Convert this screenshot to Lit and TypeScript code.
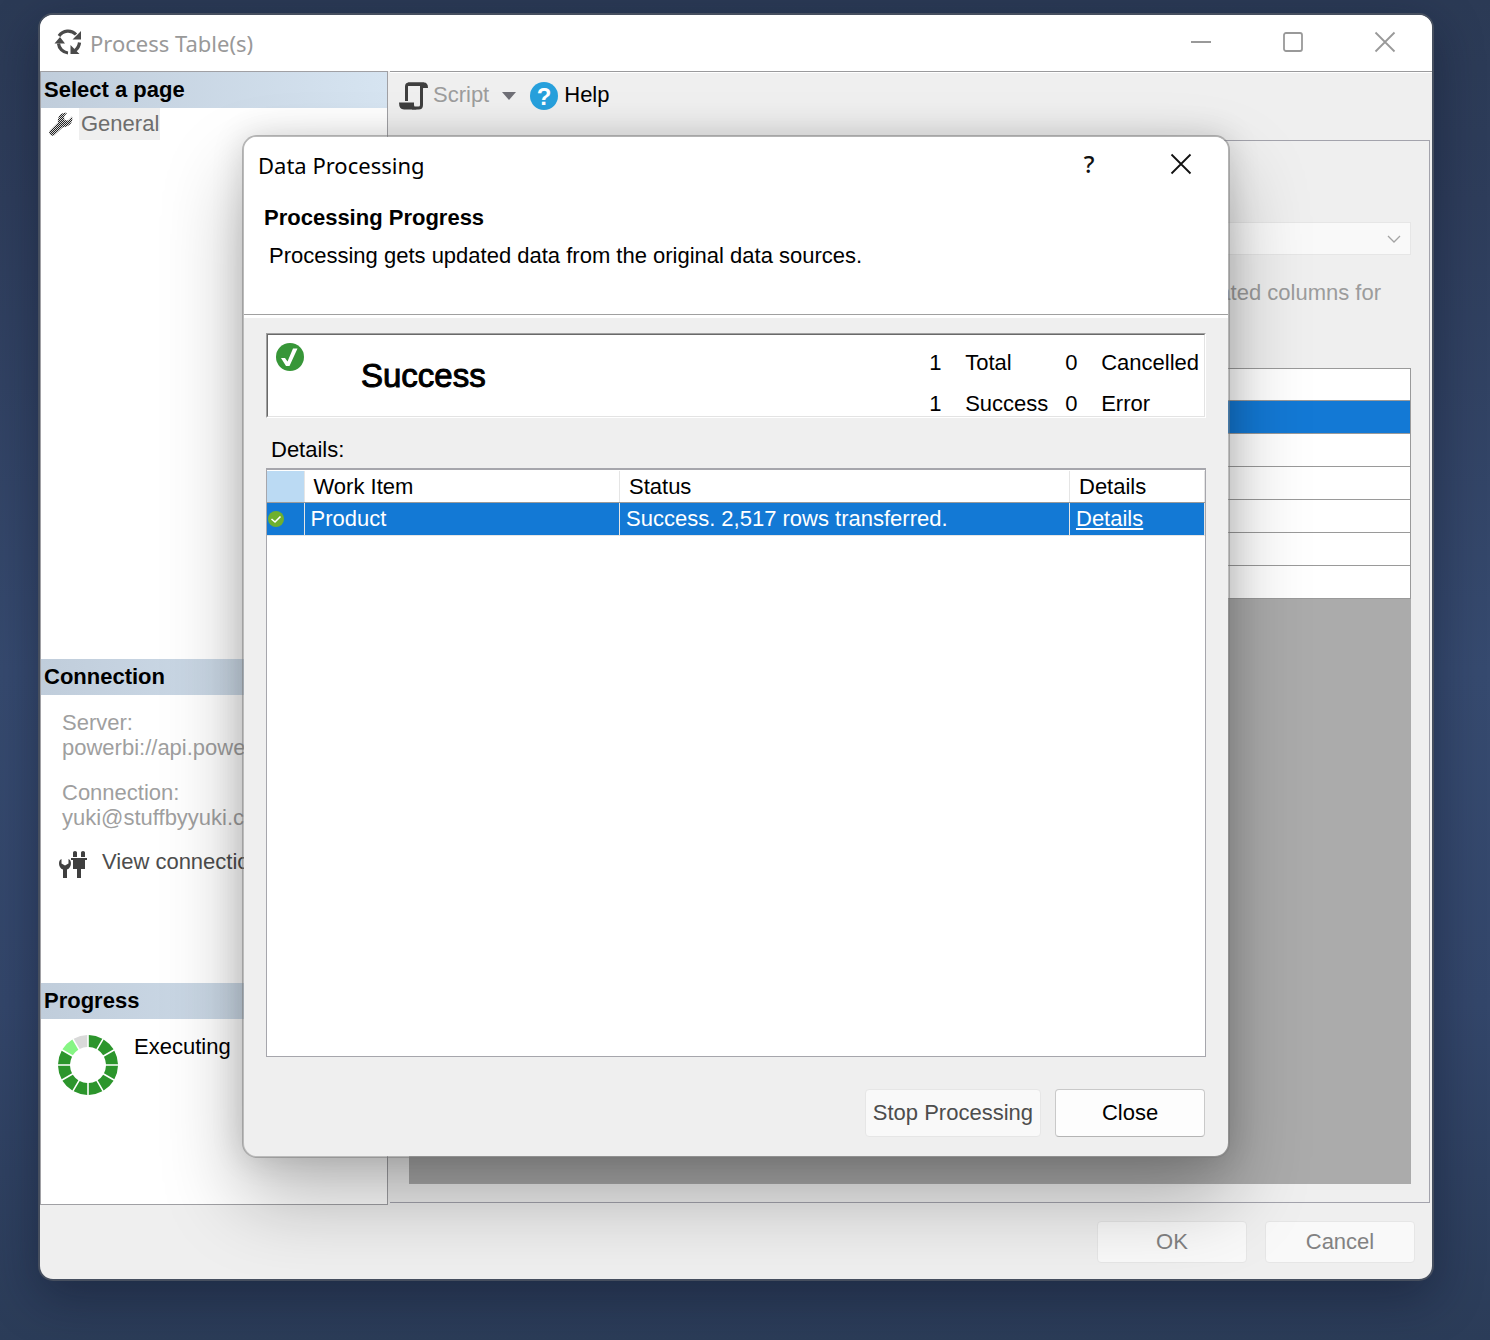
import { LitElement, html, css, svg } from "lit";
import { customElement, state } from "lit/decorators.js";

interface WorkItem {
  name: string;
  status: string;
}

/** One wedge of the busy ring, `index` counted clockwise from the top. */
const ringSegment = (index: number) => {
  const point = (radius: number, degrees: number) => {
    const a = ((degrees - 90) * Math.PI) / 180;
    return `${(31 + radius * Math.cos(a)).toFixed(2)} ${(31 + radius * Math.sin(a)).toFixed(2)}`;
  };
  const from = index * 30;
  const to = from + 30;
  const d = `M${point(30, from + 1.5)}A30 30 0 0 1 ${point(30, to - 1.5)}L${point(18, to - 2.5)}A18 18 0 0 0 ${point(18, from + 2.5)}Z`;
  const fill = index === 11 ? "#d9d9d9" : index === 10 ? "#86f584" : "#2c952c";
  return svg`<path d=${d} fill=${fill}></path>`;
};

const cross = html`<svg width="22" height="22" viewBox="0 0 22 22" aria-hidden="true">
  <path d="M1.5 1.5 20.5 20.5M20.5 1.5 1.5 20.5" fill="none" stroke="currentColor" stroke-width="1.8"></path>
</svg>`;

@customElement("app-root")
export class AppRoot extends LitElement {
  @state() private items: WorkItem[] = [{ name: "Product", status: "Success. 2,517 rows transferred." }];
  @state() private counts = [
    { value: 1, label: "Total" },
    { value: 0, label: "Cancelled" },
    { value: 1, label: "Success" },
    { value: 0, label: "Error" },
  ];

  static styles = css`
    :host {
      display: flex;
      box-sizing: border-box;
      min-height: 100vh;
      padding: 13px 56px 59px 38px;
      background: linear-gradient(180deg, #2b3a55 0%, #2e3d5b 15%, #364a6f 50%, #33466a 75%, #2b3c58 100%);
      font-family: "Liberation Sans", Arial, sans-serif;
      font-size: 22px;
      line-height: 25px;
      color: #000;
    }
    * {
      box-sizing: border-box;
    }
    svg {
      display: block;
      flex: none;
    }
    button {
      font: inherit;
      color: inherit;
      border: 0;
      padding: 0;
      background: none;
    }
    h1,
    h2,
    h3,
    p,
    dl,
    dd {
      margin: 0;
      font-size: inherit;
    }
    a {
      color: inherit;
    }
    table {
      width: 100%;
      border-collapse: collapse;
      table-layout: fixed;
    }

    .window {
      position: relative;
      flex: 1;
      display: flex;
      flex-direction: column;
      border: 2px solid #464f5f;
      border-radius: 15px;
      background: #efefef;
      box-shadow: 0 16px 48px rgba(10, 16, 34, 0.4);
    }
    .titlebar {
      display: flex;
      align-items: center;
      height: 56px;
      padding: 0 1px 0 14px;
      border-radius: 13px 13px 0 0;
      background: #fff;
    }
    .titlebar > svg {
      margin-bottom: 2px;
    }
    .caption {
      flex: 1;
      font-family: "Noto Sans", "Open Sans", sans-serif;
      font-size: 22px;
      font-weight: 400;
    }
    .window > .titlebar .caption {
      margin-left: 8px;
      color: #999;
    }
    .chrome {
      display: flex;
      align-items: center;
      justify-content: center;
      width: 92px;
      height: 56px;
      padding-bottom: 2px;
      font-family: "Noto Sans", sans-serif;
      font-size: 24px;
      color: #111;
    }
    .chrome.ask {
      padding-bottom: 4px;
      font-weight: 500;
    }
    .window > .titlebar .chrome {
      color: #999;
    }

    .body {
      flex: 1;
      display: flex;
      gap: 2px;
    }
    .side {
      width: 348px;
      display: flex;
      flex-direction: column;
      margin-bottom: 74px;
      border: 1px solid #a0a0a4;
      background: #fff;
    }
    .side h2 {
      height: 36px;
      padding-left: 3px;
      line-height: 36px;
      font-weight: 700;
      background: linear-gradient(90deg, #c0cddb, #d6e4f1);
    }
    .pages {
      flex: 1;
    }
    .page {
      display: flex;
      align-items: center;
      gap: 6px;
      padding-left: 8px;
      color: #6d6d6d;
    }
    .page span {
      padding: 0 1px 0 2px;
      line-height: 32px;
      background: #efefef;
    }
    .connection {
      height: 324px;
    }
    .facts {
      display: flex;
      flex-direction: column;
      gap: 20px;
      padding: 15px 0 0 21px;
      color: #9f9f9f;
    }
    .view {
      display: flex;
      align-items: flex-start;
      gap: 14px;
      margin-top: 19px;
      padding-left: 17px;
      color: #4d4d4d;
      text-decoration: none;
    }
    .progress {
      height: 221px;
    }
    .busy {
      display: flex;
      gap: 15px;
      padding: 15px 0 0 16px;
    }

    .main {
      flex: 1;
      display: flex;
      flex-direction: column;
      border-top: 1px solid #9a9a9c;
    }
    .tools {
      display: flex;
      align-items: flex-start;
      height: 68px;
      padding: 8px 0 0 8px;
      border-top: 1px solid #fff;
    }
    .tool {
      display: flex;
      align-items: center;
      gap: 5px;
      height: 30px;
      line-height: 24px;
    }
    .tool span {
      padding-bottom: 2px;
    }
    .tool.script {
      margin-right: 13px;
      color: #9c9c9c;
    }
    .tool.script .arrow {
      margin-left: 8px;
    }
    .mark {
      font: 700 24px "Liberation Sans", Arial, sans-serif;
    }
    .form {
      flex: 1;
      display: flex;
      flex-direction: column;
      margin-right: 2px;
      padding: 81px 18px 18px 19px;
      border: solid #a3a3ac;
      border-width: 1px 1px 1px 0;
    }
    .mode {
      position: relative;
      display: flex;
      align-items: center;
      justify-content: flex-end;
    }
    .mode select {
      appearance: none;
      width: 100%;
      height: 33px;
      border: 1px solid #e6e6e6;
      background: #f9f9f9;
      opacity: 1;
    }
    .mode svg {
      position: absolute;
      right: 10px;
    }
    .hint {
      margin: 25px 30px 63px 0;
      text-align: right;
      color: #9c9c9c;
    }
    .tables {
      flex: 1;
      background: #ababab;
    }
    .tables table {
      border-top: 1px solid #9a9a9a;
      border-right: 1px solid #9a9a9a;
    }
    .tables td {
      height: 33px;
      padding: 0;
      border-bottom: 1px solid #9a9a9a;
      background: #fff;
    }
    .tables tr:first-child td {
      height: 32px;
    }
    .tables .picked td {
      background: #1379d5;
    }
    .footer {
      display: flex;
      justify-content: flex-end;
      gap: 18px;
      padding: 18px 17px 16px 0;
    }
    .push {
      min-width: 150px;
      height: 48px;
      padding: 0 7px 2px;
      border: 1px solid #e6e6e6;
      border-radius: 4px;
      background: #f9f9f9;
      color: #4d4d4d;
    }
    .footer .push {
      height: 42px;
      color: #828282;
    }
    .push.active {
      border-color: #c9c9c9 #c9c9c9 #b4b4b4;
      background: #fdfdfd;
      color: #000;
    }

    .dialog {
      position: absolute;
      inset: 120px 202px 121px;
      display: flex;
      flex-direction: column;
      border: 2px solid rgba(120, 120, 120, 0.5);
      border-radius: 15px;
      background: #efefef;
      background-clip: padding-box;
      box-shadow: 0 40px 80px rgba(0, 0, 0, 0.28), 0 0 32px rgba(0, 0, 0, 0.14);
    }
    .intro {
      padding: 12px 0 0 20px;
      height: 122px;
      background: #fff;
      border-bottom: 1px solid #a0a0a0;
    }
    .intro p {
      margin: 13px 0 0 5px;
    }
    .content {
      flex: 1;
      display: flex;
      flex-direction: column;
      padding: 15px 22px 19px;
      border-top: 3px solid #fff;
    }
    .summary {
      display: flex;
      border: 1px solid;
      border-color: #a0a0a0 #fff #fff #a0a0a0;
    }
    .summary-inner {
      flex: 1;
      display: flex;
      height: 83px;
      padding: 0 5px 0 7px;
      border: 1px solid;
      border-color: #696969 #e3e3e3 #e3e3e3 #696969;
      background: #fff;
    }
    .summary-inner > svg {
      margin-top: 7px;
    }
    .result {
      flex: 1;
      padding-left: 56px;
      font-size: 33px;
      line-height: 81px;
      font-weight: 400;
      -webkit-text-stroke: 1px #000;
    }
    .counts {
      display: grid;
      grid-template-columns: 136px auto;
      row-gap: 16px;
      padding-top: 15px;
    }
    .count {
      display: flex;
      flex-direction: row-reverse;
      justify-content: flex-end;
    }
    .count dd {
      width: 36px;
    }
    .list-label {
      padding: 19px 0 6px 5px;
    }
    .list {
      flex: 1;
      padding-top: 1px;
      border: 1px solid #a6a6ac;
      border-top-width: 2px;
      background: #fff;
    }
    .list th {
      height: 31px;
      padding: 0 0 0 9px;
      text-align: left;
      font-weight: 400;
      border-right: 1px solid #e5e5e5;
      border-bottom: 1px solid #9a9a9a;
    }
    .list td {
      height: 33px;
      padding: 0 0 0 6px;
      background: #1379d5;
      color: #fff;
      border-right: 1px solid #e5e5e5;
      border-bottom: 1px solid #e5e5e5;
    }
    .list th:first-child {
      background: #bbdaf3;
    }
    .list td:first-child {
      padding: 0 0 0 1px;
    }
    .state {
      width: 37px;
    }
    .status {
      width: 450px;
    }
    .link {
      width: 135px;
    }
    .actions {
      display: flex;
      justify-content: flex-end;
      gap: 14px;
      padding: 32px 1px 0 0;
    }
  `;

  render() {
    return html`
      <main class="window">
        <header class="titlebar">
          <svg width="28" height="28" viewBox="0 0 28 28" aria-hidden="true">
            <g fill="none" stroke="#4a4a4a" stroke-width="3.2">
              <path d="M5 8A11 11 0 0 1 22 6.500"></path>
              <path d="M25.500 14.500A11 11 0 0 1 21 22.500"></path>
              <path d="M4.500 15.500A10.500 10.500 0 0 0 14 25"></path>
            </g>
            <path d="M27 3V11.500H18.500Z M16.500 17V26H25.500Z M0.500 15.500 6 9 11 15.500Z" fill="#4a4a4a"></path>
          </svg>
          <h1 class="caption">Process Table(s)</h1>
          <button class="chrome" aria-label="Minimize">
            <svg width="20" height="22" viewBox="0 0 20 22"><path d="M0 11H20" stroke="currentColor" stroke-width="2"></path></svg>
          </button>
          <button class="chrome" aria-label="Maximize">
            <svg width="20" height="20" viewBox="0 0 20 20">
              <rect x="1" y="1" width="18" height="18" rx="2" fill="none" stroke="currentColor" stroke-width="1.8"></rect>
            </svg>
          </button>
          <button class="chrome" aria-label="Close window">${cross}</button>
        </header>

        <div class="body">
          <aside class="side">
            <section class="pages">
              <h2>Select a page</h2>
              <button class="page">
                <svg width="24" height="24" viewBox="0 0 24 24" aria-hidden="true">
                  <defs>
                    <pattern id="dots" width="2" height="2" patternUnits="userSpaceOnUse">
                      <rect width="2" height="2" fill="#d8d8d8"></rect>
                      <rect width="1" height="1" fill="#222"></rect>
                      <rect x="1" y="1" width="1" height="1" fill="#222"></rect>
                    </pattern>
                  </defs>
                  <path
                    d="M18 1 15 4.500 15.500 8 19 8.500 23 4.500C24.500 9 21.500 15 13.500 15.500L5 23.500C2.500 25-1 21.500 .500 19L9 10.500C8 4.500 12.500-.500 18 1Z"
                    fill="url(#dots)"
                  ></path>
                </svg>
                <span>General</span>
              </button>
            </section>
            <section class="connection">
              <h2>Connection</h2>
              <div class="facts">
                <p>Server:<br />powerbi://api.powerbi.com</p>
                <p>Connection:<br />yuki@stuffbyyuki.com</p>
              </div>
              <a class="view" href="#properties">
                <svg width="30" height="30" viewBox="0 -1 30 30" aria-hidden="true">
                  <path
                    d="M3.500 9C0 10 0 18 5 19.500V28H9V19.500C14 18 14 10 10.500 9V13.500L7 15.500 3.500 13.500Z M15 2.500Q15 1 17 1T19 2.500V7H15Z M23 2.500Q23 1 25 1T27 2.500V7H23Z M13 8H29V10H27V19H23V28H19V19H15V10H13Z"
                    fill="#3f3f3f"
                  ></path>
                </svg>
                View connection
              </a>
            </section>
            <section class="progress">
              <h2>Progress</h2>
              <div class="busy">
                <svg width="62" height="62" viewBox="0 0 62 62" aria-hidden="true">
                  ${Array.from({ length: 12 }, (_, i) => ringSegment(i))}
                </svg>
                <span>Executing</span>
              </div>
            </section>
          </aside>

          <div class="main">
            <div class="tools">
              <button class="tool script" disabled>
                <svg width="30" height="30" viewBox="0 0 30 30" aria-hidden="true">
                  <path d="M8.500 20V5.500Q8.500 3 11 3H26Q23.500 4 23.500 8V24Q23.500 27 20.500 27H14" fill="none" stroke="#3f3f3f" stroke-width="3"></path>
                  <path d="M10 1.500H26Q30 1.500 30 7H22V5H10Z M1 21.500H16V24Q16 26.500 18.500 28.500H6Q1 28.500 1 21.500Z" fill="#3f3f3f"></path>
                </svg>
                <span>Script</span>
                <svg class="arrow" width="14" height="8" viewBox="0 0 14 8" aria-hidden="true"><path d="M0 0H14L7 8Z" fill="#6f6f76"></path></svg>
              </button>
              <button class="tool">
                <svg width="30" height="30" viewBox="0 0 30 30" aria-hidden="true">
                  <circle cx="15" cy="15" r="14" fill="#27a0dc"></circle>
                  <text class="mark" x="15" y="24" text-anchor="middle" fill="#fff">?</text>
                </svg>
                <span>Help</span>
              </button>
            </div>
            <div class="form">
              <div class="mode">
                <select aria-label="Mode" disabled><option></option></select>
                <svg width="14" height="8" viewBox="0 0 14 8" aria-hidden="true"><path d="M1 1 7 7 13 1" fill="none" stroke="#a3a3a3" stroke-width="1.300"></path></svg>
              </div>
              <p class="hint">calculated columns for</p>
              <div class="tables">
                <table aria-label="Tables">
                  <tbody>
                    ${Array.from({ length: 7 }, (_, i) => html`<tr class=${i === 1 ? "picked" : ""}><td></td></tr>`)}
                  </tbody>
                </table>
              </div>
            </div>
            <footer class="footer">
              <button class="push" disabled>OK</button>
              <button class="push" disabled>Cancel</button>
            </footer>
          </div>
        </div>

        <section class="dialog" role="dialog" aria-labelledby="dialog-title">
          <header class="titlebar">
            <h2 class="caption" id="dialog-title">Data Processing</h2>
            <button class="chrome ask" aria-label="Help on this dialog">?</button>
            <button class="chrome" aria-label="Close dialog">${cross}</button>
          </header>
          <div class="intro">
            <h3>Processing Progress</h3>
            <p>Processing gets updated data from the original data sources.</p>
          </div>
          <div class="content">
            <div class="summary">
              <div class="summary-inner">
                <svg width="30" height="30" viewBox="0 0 30 30" aria-hidden="true">
                  <circle cx="15" cy="15" r="14" fill="#379638"></circle>
                  <path d="M6 16H10L12.500 19.500 18 6.500H22.500L14.500 24H11Z" fill="#fff"></path>
                </svg>
                <h3 class="result">Success</h3>
                <dl class="counts">
                  ${this.counts.map((c) => html`<div class="count"><dt>${c.label}</dt><dd>${c.value}</dd></div>`)}
                </dl>
              </div>
            </div>
            <div class="list-label" id="list-label">Details:</div>
            <div class="list">
              <table aria-labelledby="list-label">
                <thead>
                  <tr>
                    <th class="state"></th>
                    <th>Work Item</th>
                    <th class="status">Status</th>
                    <th class="link">Details</th>
                  </tr>
                </thead>
                <tbody>
                  ${this.items.map(
                    (item) => html`<tr>
                      <td>
                        <svg width="16" height="16" viewBox="0 0 16 16" role="img" aria-label="Done">
                          <circle cx="8" cy="8" r="8" fill="#6fb02e"></circle>
                          <path d="M3.500 8 7 11 12.500 5.500" fill="none" stroke="#fff" stroke-width="1.600"></path>
                        </svg>
                      </td>
                      <td>${item.name}</td>
                      <td>${item.status}</td>
                      <td><a href="#details">Details</a></td>
                    </tr>`
                  )}
                </tbody>
              </table>
            </div>
            <div class="actions">
              <button class="push" disabled>Stop Processing</button>
              <button class="push active">Close</button>
            </div>
          </div>
        </section>
      </main>
    `;
  }
}
